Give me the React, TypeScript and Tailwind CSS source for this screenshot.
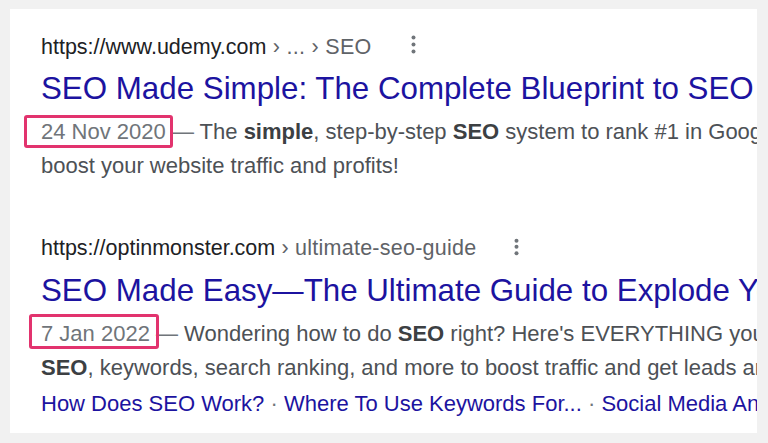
const font = { fontFamily: '"Liberation Sans", Arial, sans-serif' };

function Dots({ ys }: { ys: number[] }) {
  return (
    <svg width="5" height="36" viewBox="0 0 5 36" className="shrink-0">
      {ys.map((y) => (
        <circle key={y} cx="2.5" cy={y} r="2" fill="#70757a" />
      ))}
    </svg>
  );
}

function DateBox({ text, box }: { text: string; box: string }) {
  return (
    <span className="relative text-[#70757a]">
      {text}
      <span className={`pointer-events-none absolute rounded-[3px] border-[3px] border-[#e2336e] ${box}`} />
    </span>
  );
}

export default function App() {
  return (
    <div className="h-[443px] w-[768px] bg-[#f1f1f1] pl-[10px] pt-[9px]" style={font}>
      <div className="flex h-[424px] w-[747px] flex-col overflow-hidden whitespace-nowrap bg-white pl-[31px] pt-[19.5px]">
        {/* result 1 */}
        <div className="flex items-start">
          <span className="text-[21.5px] leading-[36px] text-[#202124]">
            https://www.udemy.com<span className="tracking-[0.3px] text-[#5f6368]"> › ... › SEO</span>
          </span>
          <span className="ml-[39px]">
            <Dots ys={[8.5, 15.5, 22.5]} />
          </span>
        </div>
        <div className="text-[31.3px] leading-[48px] text-[#1c13a0]">
          SEO Made Simple: The Complete Blueprint to SEO
        </div>
        <div className="mt-[2px] text-[22px] leading-[34px] text-[#4d5156]">
          <div>
            <DateBox text="24 Nov 2020" box="-left-[17px] -right-[7px] -top-[4px] -bottom-[4px]" />
            <span className="text-[#70757a]"> — </span>
            The <b className="text-[#3c4043]">simple</b>, step-by-step <b className="text-[#3c4043]">SEO</b> system to rank #1 in Google and
          </div>
          <div>boost your website traffic and profits!</div>
        </div>

        {/* result 2 */}
        <div className="mt-[47px] flex items-start">
          <span className="text-[21.5px] leading-[36px] text-[#202124]">
            https://optinmonster.com<span className="tracking-[0.25px] text-[#5f6368]"> › ultimate-seo-guide</span>
          </span>
          <span className="ml-[38px]">
            <Dots ys={[10.8, 16.8, 23.2]} />
          </span>
        </div>
        <div className="mt-[1.5px] text-[31.3px] leading-[48px] text-[#1c13a0]">
          SEO Made Easy—The Ultimate Guide to Explode Your Traffic
        </div>
        <div className="mt-[2px] text-[22px] leading-[34px] text-[#4d5156]">
          <div>
            <DateBox text="7 Jan 2022" box="-left-[12px] -right-[9px] -top-[7px] -bottom-[3px]" />
            <span className="text-[#70757a]"> — </span>
            Wondering how to do <b className="text-[#3c4043]">SEO</b> right? Here's EVERYTHING you need to know about
          </div>
          <div>
            <b className="text-[#3c4043]">SEO</b>, keywords, search ranking, and more to boost traffic and get leads and sales.
          </div>
        </div>
        <div className="mt-[1.5px] text-[22px] leading-[34px] text-[#1c13a0]">
          How Does SEO Work?<span className="text-[#70757a]"> · </span>Where To Use Keywords For...
          <span className="text-[#70757a]"> · </span>Social Media And SEO
        </div>
      </div>
    </div>
  );
}
